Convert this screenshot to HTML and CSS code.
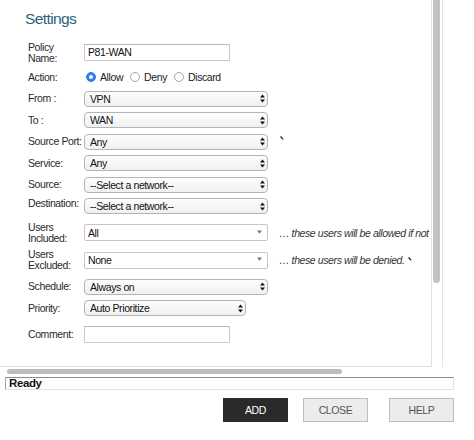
FILE: index.html
```html
<!DOCTYPE html>
<html>
<head>
<meta charset="utf-8">
<link rel="stylesheet" href="styles.css">
</head>
<body>
<div class="window">
  <div class="viewport">
    <div class="panel">
      <h1 class="title">Settings</h1>
      <div class="form">
        <div class="row two">
          <div class="label">Policy<br>Name:</div>
          <div class="text">P81-WAN</div>
        </div>
        <div class="row">
          <div class="label">Action:</div>
          <div class="radios">
            <span class="radio on"></span><span class="rlabel">Allow</span>
            <span class="radio"></span><span class="rlabel">Deny</span>
            <span class="radio"></span><span class="rlabel">Discard</span>
          </div>
        </div>
        <div class="row">
          <div class="label">From :</div>
          <div class="select"><span class="val">VPN</span><svg class="updown" width="5" height="9" viewBox="0 0 5 9"><path d="M0 3.6L2.5 0.4L5 3.6Z M0 5.4L2.5 8.6L5 5.4Z" fill="#111"/></svg></div>
        </div>
        <div class="row">
          <div class="label">To :</div>
          <div class="select"><span class="val">WAN</span><svg class="updown" width="5" height="9" viewBox="0 0 5 9"><path d="M0 3.6L2.5 0.4L5 3.6Z M0 5.4L2.5 8.6L5 5.4Z" fill="#111"/></svg></div>
        </div>
        <div class="row">
          <div class="label">Source Port:</div>
          <div class="select"><span class="val">Any</span><svg class="updown" width="5" height="9" viewBox="0 0 5 9"><path d="M0 3.6L2.5 0.4L5 3.6Z M0 5.4L2.5 8.6L5 5.4Z" fill="#111"/></svg></div>
          <svg class="tick tick-port" width="4" height="4" viewBox="0 0 4 4"><path d="M0.5 0.5L3.2 3.4" stroke="#222" stroke-width="1.3"/></svg>
        </div>
        <div class="row">
          <div class="label">Service:</div>
          <div class="select"><span class="val">Any</span><svg class="updown" width="5" height="9" viewBox="0 0 5 9"><path d="M0 3.6L2.5 0.4L5 3.6Z M0 5.4L2.5 8.6L5 5.4Z" fill="#111"/></svg></div>
        </div>
        <div class="row">
          <div class="label">Source:</div>
          <div class="select"><span class="val">--Select a network--</span><svg class="updown" width="5" height="9" viewBox="0 0 5 9"><path d="M0 3.6L2.5 0.4L5 3.6Z M0 5.4L2.5 8.6L5 5.4Z" fill="#111"/></svg></div>
        </div>
        <div class="row top">
          <div class="label">Destination:</div>
          <div class="select"><span class="val">--Select a network--</span><svg class="updown" width="5" height="9" viewBox="0 0 5 9"><path d="M0 3.6L2.5 0.4L5 3.6Z M0 5.4L2.5 8.6L5 5.4Z" fill="#111"/></svg></div>
        </div>
        <div class="row two mt2">
          <div class="label">Users<br>Included:</div>
          <div class="combo"><span class="val">All</span><svg class="down" width="5" height="4" viewBox="0 0 5 4"><path d="M0 0.5L5 0.5L2.5 3.8Z" fill="#777"/></svg></div>
          <span class="hint">… these users will be allowed if not excluded.</span>
        </div>
        <div class="row two">
          <div class="label">Users<br>Excluded:</div>
          <div class="combo"><span class="val">None</span><svg class="down" width="5" height="4" viewBox="0 0 5 4"><path d="M0 0.5L5 0.5L2.5 3.8Z" fill="#777"/></svg></div>
          <span class="hint">… these users will be denied.</span>
          <svg class="tick tick-deny" width="4" height="4" viewBox="0 0 4 4"><path d="M0.5 0.5L3.2 3.4" stroke="#222" stroke-width="1.3"/></svg>
        </div>
        <div class="row mt2">
          <div class="label">Schedule:</div>
          <div class="select"><span class="val">Always on</span><svg class="updown" width="5" height="9" viewBox="0 0 5 9"><path d="M0 3.6L2.5 0.4L5 3.6Z M0 5.4L2.5 8.6L5 5.4Z" fill="#111"/></svg></div>
        </div>
        <div class="row">
          <div class="label">Priority:</div>
          <div class="select short"><span class="val">Auto Prioritize</span><svg class="updown" width="5" height="9" viewBox="0 0 5 9"><path d="M0 3.6L2.5 0.4L5 3.6Z M0 5.4L2.5 8.6L5 5.4Z" fill="#111"/></svg></div>
        </div>
        <div class="row mt5">
          <div class="label">Comment:</div>
          <div class="text"></div>
        </div>
      </div>
    </div>
    <div class="vscroll"><div class="vthumb"></div></div>
  </div>
  <div class="hscroll"><div class="hthumb"></div></div>
  <div class="status">Ready</div>
  <div class="actions">
    <div class="btn primary">ADD</div>
    <div class="btn close">CLOSE</div>
    <div class="btn help">HELP</div>
  </div>
</div>
</body>
</html>
```

FILE: styles.css
```css
* { box-sizing: border-box; }

body {
  margin: 0;
  background: #fff;
  color: #222;
  font-family: "Liberation Sans", Arial, sans-serif;
  font-size: 10.5px;
  letter-spacing: -0.4px;
}

.window {
  width: 474px;
  height: 440px;
}

.viewport {
  display: flex;
  height: 367px;
}

.panel {
  width: 432px;
  height: 367px;
  flex: none;
  overflow: hidden;
  padding-left: 25px;
  border-right: 1px solid #e3e3e3;
  border-bottom: 1px solid #e3e3e3;
}

.title {
  margin: 0 0 13.5px 0;
  padding-top: 10px;
  font-size: 15.5px;
  line-height: 18px;
  letter-spacing: -0.6px;
  font-weight: normal;
  color: #2c6279;
}

.form {
  display: flex;
  flex-direction: column;
  gap: 5.5px;
  margin-left: 3px;
}

.row {
  display: flex;
  align-items: center;
  height: 16px;
}
.row.two { height: 22px; }
.row.top { align-items: flex-start; }
.row.mt2 { margin-top: 2px; }
.row.mt5 { margin-top: 4.5px; }

.label {
  width: 56px;
  flex: none;
  line-height: 11px;
  white-space: nowrap;
  color: #2a2a2a;
}

.text {
  width: 146px;
  height: 17px;
  border: 1px solid #cacaca;
  border-top-color: #b9b9b9;
  background: #fff;
  padding-left: 3px;
  line-height: 15px;
  color: #111;
}

.radios {
  display: flex;
  align-items: center;
  margin-left: 2px;
}
.radio {
  width: 10px;
  height: 10px;
  border-radius: 50%;
  border: 1px solid #a8a8a8;
  background: #fff;
  position: relative;
  margin-left: 7px;
}
.radio:first-child { margin-left: 0; }
.radio.on {
  background: #2f7cf5;
  border-color: #2f7cf5;
}
.radio.on::after {
  content: "";
  position: absolute;
  left: 2px;
  top: 2px;
  width: 4px;
  height: 4px;
  border-radius: 50%;
  background: #fff;
}
.rlabel {
  margin-left: 4px;
  color: #222;
}

.select {
  width: 184px;
  height: 16px;
  flex: none;
  display: flex;
  align-items: center;
  padding: 0 2px 0 5px;
  border: 1px solid #b4b4b4;
  border-radius: 4px;
  background: linear-gradient(#fdfdfd, #f0f0f0);
  color: #111;
}
.select.short { width: 162px; }
.val {
  flex: 1;
  white-space: nowrap;
}
.updown { flex: none; }

.combo {
  width: 184px;
  height: 17px;
  flex: none;
  display: flex;
  align-items: center;
  padding: 0 5px 0 3px;
  border: 1px solid #c6c6c6;
  border-radius: 2px;
  background: #fff;
  color: #111;
}
.down { flex: none; margin-top: -2px; }

.hint {
  margin-left: 11px;
  font-style: italic;
  white-space: nowrap;
  color: #333;
}

.tick { flex: none; align-self: flex-start; }
.tick-port { margin-left: 12px; margin-top: 2px; }
.tick-deny { margin-left: 3px; margin-top: 8px; }

.vscroll {
  width: 11px;
  height: 367px;
  flex: none;
  border-right: 1px solid #e3e3e3;
  padding-left: 1px;
}
.vthumb {
  width: 7px;
  height: 283px;
  background: #c3c3c3;
  border-radius: 0 0 4px 4px;
}

.hscroll {
  height: 10px;
  padding: 2px 0 0 7px;
}
.hthumb {
  width: 335px;
  height: 5px;
  border-radius: 3px;
  background: #bcbcbc;
}

.status {
  margin-left: 5px;
  width: 449px;
  height: 13px;
  padding-left: 3px;
  border-top: 1px solid #8d8d8d;
  border-left: 1px solid #a2a2a2;
  border-right: 1px solid #e4e4e4;
  border-bottom: 1px solid #e4e4e4;
  font-size: 11.5px;
  line-height: 11px;
  font-weight: bold;
  color: #111;
}

.actions {
  display: flex;
  justify-content: flex-end;
  width: 454px;
  margin-top: 8px;
}
.btn {
  width: 65px;
  height: 24px;
  display: flex;
  align-items: center;
  justify-content: center;
  border: 1px solid #bdbdbd;
  background: #ececec;
  color: #555;
  font-size: 10.5px;
}
.btn.primary {
  background: #2a2a2a;
  border-color: #2a2a2a;
  color: #fff;
}
.btn.close { margin-left: 15px; }
.btn.help { margin-left: 21px; }
```
